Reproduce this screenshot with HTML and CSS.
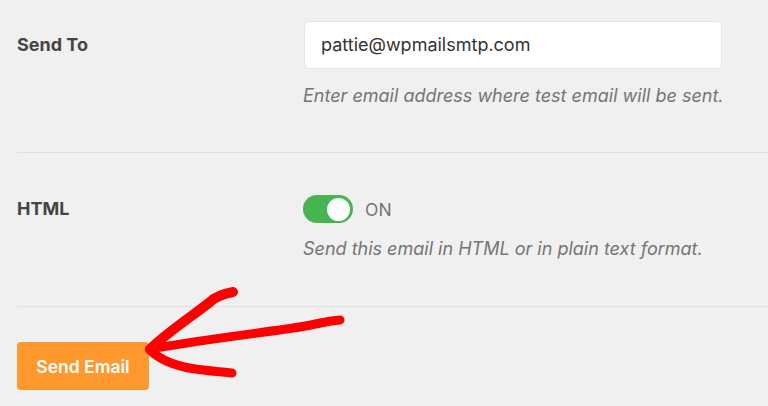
FILE: index.html
```html
<!DOCTYPE html>
<html lang="en">
<head>
<meta charset="utf-8">
<title>Send test email</title>
<link rel="stylesheet" href="styles.css">
</head>
<body>
<div class="page">
  <div class="row row-first">
    <div class="label label-input">Send To</div>
    <div class="field">
      <div class="input">pattie@wpmailsmtp.com</div>
      <p class="desc">Enter email address where test email will be sent.</p>
    </div>
  </div>
  <div class="row row-second">
    <div class="label label-toggle">HTML</div>
    <div class="field">
      <div class="toggle-line">
        <span class="toggle"><span class="knob"></span></span>
        <span class="toggle-text">ON</span>
      </div>
      <p class="desc desc-2">Send this email in HTML or in plain text format.</p>
    </div>
  </div>
  <div class="row-last">
    <button class="btn">Send Email</button>
  </div>
  <svg class="arrow" width="768" height="406" viewBox="0 0 768 406">
    <g fill="none" stroke="#ff0000" stroke-linecap="round" stroke-linejoin="round">
      <path stroke-width="10" d="M233 292 C 222 294, 214 298, 210 302 C 195 314, 170 330, 150 349"/>
      <path stroke-width="9" d="M340 320 C 325 321, 310 326, 293 328 C 260 333, 200 340, 150 349"/>
      <path stroke-width="9" d="M150 350 C 160 360, 175 366, 195 369 C 210 371, 222 372, 232 373"/>
    </g>
  </svg>
</div>
</body>
</html>
```

FILE: styles.css
```css
* { box-sizing: border-box; }
html, body {
  margin: 0;
  padding: 0;
  background: #f0f0f0;
}
body {
  font-family: Inter, "Liberation Sans", Arial, sans-serif;
  color: #444;
  width: 768px;
  height: 406px;
  overflow: hidden;
}
.page {
  position: relative;
  padding-left: 17px;
  height: 406px;
}
.row {
  display: grid;
  grid-template-columns: 286px 1fr;
  border-bottom: 1px solid #e0e0e0;
}
.row-first {
  padding-top: 21px;
  height: 153px;
}
.row-second {
  padding-top: 42px;
  height: 154px;
}
.label {
  font-size: 18px;
  font-weight: 700;
  color: #444;
}
.label-input { line-height: 48px; }
.label-toggle { line-height: 28px; }
.field { display: flex; flex-direction: column; }
.input {
  width: 418px;
  height: 48px;
  margin-left: 1px;
  background: #fff;
  border: 1px solid #e4e4e4;
  border-radius: 5px;
  padding-left: 16px;
  font-size: 18px;
  line-height: 46px;
  color: #333;
}
.desc {
  margin: 15px 0 0;
  font-size: 18px;
  line-height: 24px;
  font-style: italic;
  color: #757575;
  white-space: nowrap;
}
.desc-2 { margin-top: 14px; }
.toggle-line {
  display: flex;
  align-items: center;
  height: 28px;
  gap: 12px;
}
.toggle {
  width: 50px;
  height: 28px;
  border-radius: 14px;
  background: #46b450;
  display: flex;
  align-items: center;
  justify-content: flex-end;
  padding-right: 3px;
}
.knob {
  width: 23px;
  height: 23px;
  border-radius: 50%;
  background: #fff;
}
.toggle-text {
  font-size: 17.5px;
  color: #757575;
}
.row-last {
  padding-top: 35px;
}
.btn {
  width: 132px;
  height: 48px;
  border: 0;
  border-radius: 4px;
  background: #ff982d;
  color: #fff;
  font-family: inherit;
  font-size: 17.5px;
  font-weight: 600;
  padding: 0;
}
.arrow {
  position: absolute;
  left: 0;
  top: 0;
  pointer-events: none;
}
```
